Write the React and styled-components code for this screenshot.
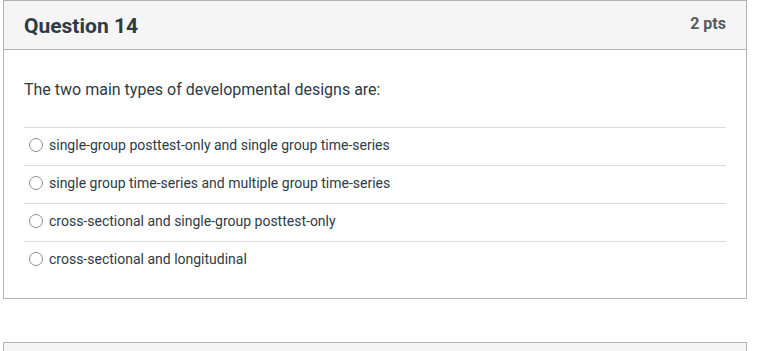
import React from 'react';
import styled, { createGlobalStyle } from 'styled-components';

const Global = createGlobalStyle`
  body {
    margin: 0;
    background: #fff;
    font-family: Roboto, "Liberation Sans", sans-serif;
    color: #2d3b45;
  }
`;

const Page = styled.div`
  padding: 0 33px 0 3px;
  display: flex;
  flex-direction: column;
  gap: 43px;
`;

const Card = styled.div`
  border: 1px solid #b3b3b3;
  background: #fff;
`;

const Header = styled.div`
  display: flex;
  align-items: center;
  justify-content: space-between;
  height: 48px;
  padding: 0 20px;
  background: #f5f5f5;
  border-bottom: 1px solid #b3b3b3;
`;

const Title = styled.div`
  font-size: 21px;
  font-weight: 700;
  color: #2d3b45;
  margin-top: 1px;
`;

const Points = styled.div`
  font-size: 16px;
  font-weight: 700;
  color: #5a5a5a;
  margin-top: -4px;
`;

const Body = styled.div`
  padding: 28px 20px 19px;
`;

const Prompt = styled.p`
  margin: 0 0 25px;
  font-size: 16px;
  line-height: 24px;
`;

const Answers = styled.div`
  display: flex;
  flex-direction: column;
`;

const Answer = styled.label`
  display: flex;
  align-items: center;
  gap: 6px;
  box-sizing: border-box;
  height: 38px;
  padding: 0 0 4px 5px;
  border-top: 1px solid #dcdcdc;
  font-size: 14px;
  color: #2d3b45;
`;

const Radio = styled.span`
  width: 12px;
  height: 12px;
  border: 1px solid #8f8f8f;
  border-radius: 50%;
  background: #fff;
  flex: none;
`;

const NextCard = styled(Card)`
  height: 20px;
  background: #f5f5f5;
`;

const answers = [
  'single-group posttest-only and single group time-series',
  'single group time-series and multiple group time-series',
  'cross-sectional and single-group posttest-only',
  'cross-sectional and longitudinal',
];

const App = () => (
  <Page>
    <Global />
    <Card>
      <Header>
        <Title>Question 14</Title>
        <Points>2 pts</Points>
      </Header>
      <Body>
        <Prompt>The two main types of developmental designs are:</Prompt>
        <Answers>
          {answers.map(a => (
            <Answer key={a}>
              <Radio />
              {a}
            </Answer>
          ))}
        </Answers>
      </Body>
    </Card>
    <NextCard />
  </Page>
);

export default App;
